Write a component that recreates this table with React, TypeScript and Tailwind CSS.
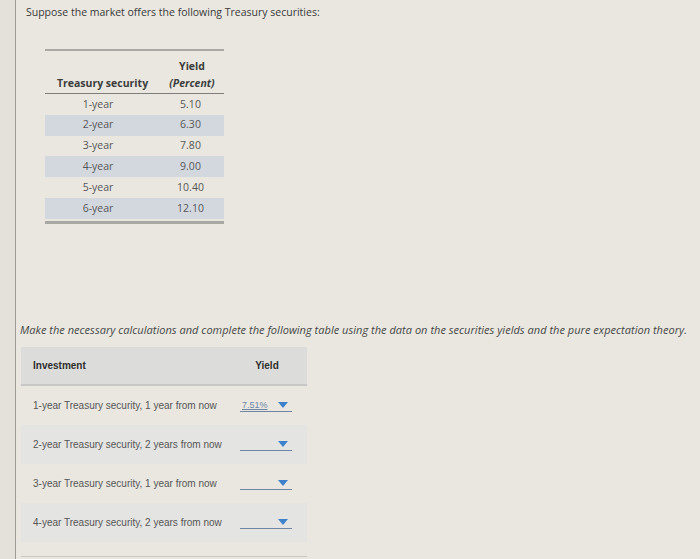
import React from "react";

const yields = [
  { term: "1-year", value: "5.10" },
  { term: "2-year", value: "6.30" },
  { term: "3-year", value: "7.80" },
  { term: "4-year", value: "9.00" },
  { term: "5-year", value: "10.40" },
  { term: "6-year", value: "12.10" },
];

const investments = [
  { label: "1-year Treasury security, 1 year from now", answer: "7.51%" },
  { label: "2-year Treasury security, 2 years from now", answer: "" },
  { label: "3-year Treasury security, 1 year from now", answer: "" },
  { label: "4-year Treasury security, 2 years from now", answer: "" },
];

function Dropdown({ value }: { value: string }) {
  return (
    <div className="flex h-[14px] w-[52px] items-end justify-between border-b border-[#6f86a3] pb-[1px]">
      <span className="pl-[2px] text-[9px] leading-none text-[#6d86a6] underline">
        {value}
      </span>
      <svg width="10" height="6" viewBox="0 0 10 6" className="mb-[2px] mr-[4px]">
        <path d="M0 0 L10 0 L5 6 Z" fill="#3f82cc" />
      </svg>
    </div>
  );
}

export default function App() {
  return (
    <div className="flex h-[559px] w-[700px] overflow-hidden bg-[#e9e7e0] font-['Open_Sans',sans-serif]">
      <div className="w-[16px] shrink-0 border-r border-[#9c9b97] bg-[#e3e1da]" />

      <div className="flex min-w-0 flex-1 flex-col">
        <p className="pl-[10px] pt-[4px] text-[10.5px] leading-[16px] text-[#3a3a3a]">
          Suppose the market offers the following Treasury securities:
        </p>

        <div className="ml-[29px] mt-[29px] w-[179px] border-t-2 border-b-[3px] border-t-[#a9a8a3] border-b-[#a9a8a3] pb-[2px]">
          <div className="flex border-b border-[#7d7d7b] pt-[7px] pb-[1px] text-[10.5px] font-bold leading-[17px] text-[#3c3c3c]">
            <div className="flex w-[115px] items-end justify-center">Treasury security</div>
            <div className="flex flex-1 flex-col items-center">
              <span>Yield</span>
              <span className="italic">(Percent)</span>
            </div>
          </div>
          {yields.map((row, i) => (
            <div
              key={row.term}
              className={`flex h-[20.8px] items-center text-[10.5px] text-[#575757] ${
                i % 2 === 1 ? "bg-[#d3d8df]" : ""
              }`}
            >
              <div className="w-[106px] text-center">{row.term}</div>
              <div className="flex-1 pl-[6px] text-center">{row.value}</div>
            </div>
          ))}
        </div>

        <p className="mt-[98px] whitespace-nowrap pl-[4px] text-[11px] italic leading-[16px] tracking-[0.03px] text-[#474747]">
          Make the necessary calculations and complete the following table using the data on the securities yields and the pure expectation theory.
        </p>

        <div className="ml-[5px] mt-[9px] w-[286px] border-b border-[#c9c8c4] font-['Liberation_Sans',sans-serif]">
          <div className="flex h-[39px] items-center border-b-2 border-[#c7c7c5] bg-[#dcdcda] text-[10px] font-bold text-[#2e2e2e]">
            <div className="w-[220px] pl-[12px]">Investment</div>
            <div className="w-[52px] text-center">Yield</div>
          </div>
          {investments.map((row, i) => (
            <div
              key={row.label}
              className={`flex h-[39px] items-center text-[10px] text-[#565656] ${
                i % 2 === 1 ? "bg-[#e4e4e2]" : ""
              }`}
            >
              <div className="w-[219px] pl-[12px]">{row.label}</div>
              <Dropdown value={row.answer} />
            </div>
          ))}
          <div className="h-[14px]" />
        </div>
      </div>
    </div>
  );
}
